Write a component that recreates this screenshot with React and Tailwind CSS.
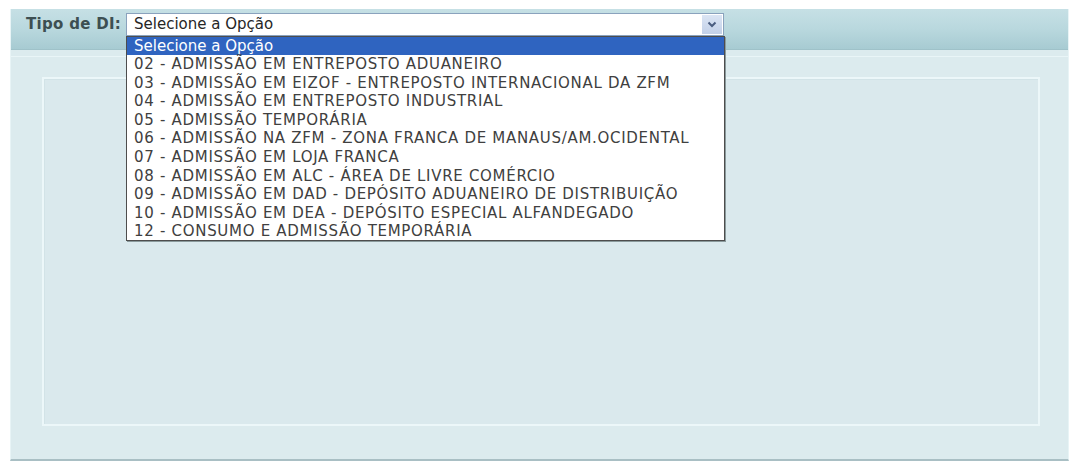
import React from "react";

const items = [
  "02 - ADMISSÃO EM ENTREPOSTO ADUANEIRO",
  "03 - ADMISSÃO EM EIZOF - ENTREPOSTO INTERNACIONAL DA ZFM",
  "04 - ADMISSÃO EM ENTREPOSTO INDUSTRIAL",
  "05 - ADMISSÃO TEMPORÁRIA",
  "06 - ADMISSÃO NA ZFM - ZONA FRANCA DE MANAUS/AM.OCIDENTAL",
  "07 - ADMISSÃO EM LOJA FRANCA",
  "08 - ADMISSÃO EM ALC - ÁREA DE LIVRE COMÉRCIO",
  "09 - ADMISSÃO EM DAD - DEPÓSITO ADUANEIRO DE DISTRIBUIÇÃO",
  "10 - ADMISSÃO EM DEA - DEPÓSITO ESPECIAL ALFANDEGADO",
  "12 - CONSUMO E ADMISSÃO TEMPORÁRIA",
];

export default function App() {
  return (
    <div className="w-[1079px] h-[467px] bg-white pt-[9px] pl-[10px] font-['DejaVu_Sans',sans-serif]">
      <div className="relative w-[1059px] h-[452px] bg-[#dcebee] border-b-[2px] border-[#a9bfc4] border-l border-l-[#e8f4f6] border-r border-r-[#e8f4f6] flex flex-col">
        {/* header */}
        <div className="h-[41px] bg-gradient-to-b from-[#c6e0e5] via-[#b9d8de] to-[#a7cbd2] border-b border-[#9fc2c9] flex items-start pl-[15px] pt-[4px]">
          <span className="text-[15px] font-bold text-[#3d4f52] leading-[22px] w-[100px] tracking-[0.3px]">Tipo de DI:</span>
          <div className="relative w-[598px] h-[23px] bg-white border border-[#8aa2bd] flex items-center">
            <span className="pl-[7px] text-[15px] text-[#262626] leading-none">Selecione a Opção</span>
            <div className="absolute right-[1px] top-[1px] w-[20px] h-[19px] bg-gradient-to-b from-[#dbe5f4] to-[#c2d0e8] flex items-center justify-center">
              <svg width="10" height="7" viewBox="0 0 10 7">
                <path d="M1.5 1.5 L5 5 L8.5 1.5" fill="none" stroke="#4a5d80" strokeWidth="2" />
              </svg>
            </div>
          </div>
        </div>
        <div className="h-[7px] border-b border-[#e9f5f7]" />
        {/* body */}
        <div className="pt-[20px] pl-[31px]">
          <div className="w-[998px] h-[349px] border-[2px] border-[#ecf7f9] bg-[#dae9ed] shadow-[inset_1px_1px_0_#d2e3e7]" />
        </div>

        {/* dropdown list overlay */}
        <div className="absolute left-[115px] top-[27px] w-[599px] h-[205px] bg-white border border-[#4d4d4d] shadow-[1px_1px_0_#8a9a9c] text-[15px] text-[#404040]">
          <div className="h-[18px] bg-[#2f64c0] text-white pl-[7px] leading-[18px]">Selecione a Opção</div>
          {items.map((t) => (
            <div key={t} className="h-[18.6px] pl-[7px] leading-[18.6px] whitespace-nowrap tracking-[0.7px]">
              {t}
            </div>
          ))}
        </div>
      </div>
    </div>
  );
}
